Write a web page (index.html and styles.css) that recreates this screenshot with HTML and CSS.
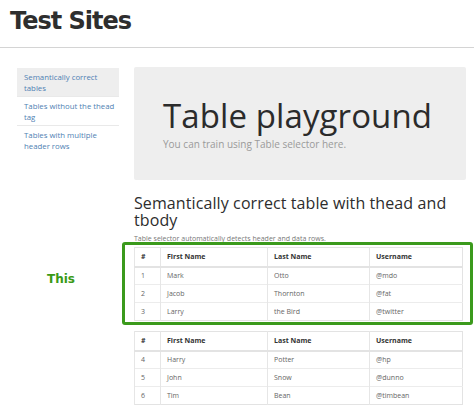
FILE: index.html
```html
<!DOCTYPE html>
<html>
<head>
<meta charset="utf-8">
<link rel="stylesheet" href="styles.css">
</head>
<body>
<header class="site-header">
  <h1 class="site-title">Test Sites</h1>
</header>
<div class="layout">
  <nav class="sidebar">
    <a class="nav-item active">Semantically correct tables</a>
    <a class="nav-item">Tables without the thead tag</a>
    <a class="nav-item">Tables with multiple header rows</a>
  </nav>
  <main class="content">
    <section class="jumbotron">
      <h2 class="jumbo-title">Table playground</h2>
      <p class="jumbo-sub">You can train using Table selector here.</p>
    </section>
    <h3 class="section-title">Semantically correct table with thead and tbody</h3>
    <p class="section-desc">Table selector automatically detects header and data rows.</p>
    <div class="table-wrap">
      <table class="data-table">
        <thead>
          <tr class="head-row"><th class="c1">#</th><th class="c2">First Name</th><th class="c3">Last Name</th><th class="c4">Username</th></tr>
        </thead>
        <tbody>
          <tr class="body-row"><td>1</td><td>Mark</td><td>Otto</td><td>@mdo</td></tr>
          <tr class="body-row"><td>2</td><td>Jacob</td><td>Thornton</td><td>@fat</td></tr>
          <tr class="body-row"><td>3</td><td>Larry</td><td>the Bird</td><td>@twitter</td></tr>
        </tbody>
      </table>
      <div class="highlight"></div>
      <div class="this-label">This</div>
    </div>
    <table class="data-table second">
      <thead>
        <tr class="head-row"><th class="c1">#</th><th class="c2">First Name</th><th class="c3">Last Name</th><th class="c4">Username</th></tr>
      </thead>
      <tbody>
        <tr class="body-row"><td>4</td><td>Harry</td><td>Potter</td><td>@hp</td></tr>
        <tr class="body-row"><td>5</td><td>John</td><td>Snow</td><td>@dunno</td></tr>
        <tr class="body-row"><td>6</td><td>Tim</td><td>Bean</td><td>@timbean</td></tr>
      </tbody>
    </table>
  </main>
</div>
</body>
</html>
```

FILE: styles.css
```css
* { box-sizing: border-box; }
html, body { margin: 0; padding: 0; background: #fff; }
body {
  font-family: "Open Sans", "DejaVu Sans", sans-serif;
  color: #333;
  overflow: hidden;
}
.site-header {
  height: 48px;
  border-bottom: 1px solid #d4d4d4;
  padding: 3px 0 0 10px;
}
.site-title {
  margin: 0;
  font-family: "DejaVu Sans", sans-serif;
  font-weight: 900;
  font-size: 24px;
  letter-spacing: -1px;
  color: #2e2e2e;
  line-height: 36px;
}
.layout {
  display: flex;
  padding: 19px 0 0 17px;
  gap: 15px;
}
.sidebar {
  width: 102px;
  flex: none;
  display: flex;
  flex-direction: column;
  margin-top: 1px;
}
.nav-item {
  display: block;
  padding: 4px 2px 5px 7px;
  font-size: 7.8px;
  line-height: 11px;
  color: #4f7fb3;
  border-bottom: 1px solid #e9e9e9;
  height: 29px;
}
.nav-item.active { background: #eeeeee; }
.nav-item:last-child { border-bottom: none; }
.content {
  width: 332px;
  flex: none;
}
.jumbotron {
  background: #eeeeee;
  height: 113px;
  padding: 29px 0 0 29px;
  border-radius: 2px;
}
.jumbo-title {
  margin: 0;
  font-weight: 400;
  font-size: 33px;
  line-height: 40px;
  color: #2b2b2b;
  letter-spacing: 0.1px;
}
.jumbo-sub {
  margin: 1px 0 0 0;
  font-size: 10px;
  color: #9a9a9a;
}
.section-title {
  margin: 15px 0 0 0;
  font-weight: 400;
  font-size: 16px;
  line-height: 17px;
  color: #2d2d2d;
  letter-spacing: 0.1px;
}
.section-desc {
  margin: 5px 0 0 0;
  font-size: 7px;
  line-height: 10px;
  color: #777;
}
.table-wrap {
  position: relative;
  margin-top: 3px;
}
.data-table {
  width: 329px;
  border-collapse: collapse;
  font-size: 7px;
  color: #666;
  border: 1px solid #e3e3e3;
}
.data-table .head-row { height: 19px; }
.data-table .body-row { height: 18px; }
.data-table th {
  text-align: left;
  font-weight: 700;
  color: #333;
  padding: 0 6px;
  border-left: 1px solid #e6e6e6;
  border-bottom: 2px solid #e3e3e3;
}
.data-table td {
  padding: 0 6px;
  border-left: 1px solid #e6e6e6;
  border-top: 1px solid #ececec;
}
.data-table .c1 { width: 26px; }
.data-table .c2 { width: 107px; }
.data-table .c3 { width: 102px; }
.highlight {
  position: absolute;
  left: -12px;
  top: -5px;
  width: 351px;
  height: 83px;
  border: 3px solid #3b9a1c;
  border-radius: 3px;
}
.this-label {
  position: absolute;
  left: -87px;
  top: 25px;
  font-family: "DejaVu Sans", sans-serif;
  font-weight: 700;
  font-size: 12px;
  color: #3a9a17;
}
.data-table.second { margin-top: 10px; }
```
